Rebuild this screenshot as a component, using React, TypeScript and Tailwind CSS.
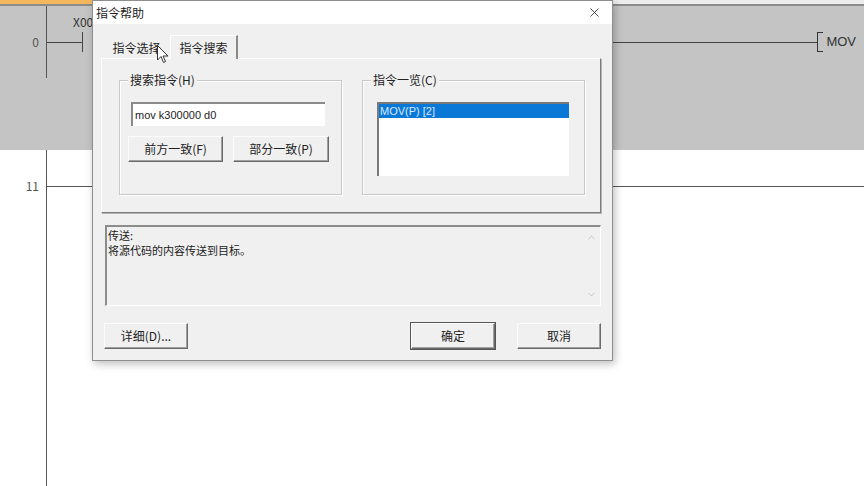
import { X, ChevronUp, ChevronDown } from "lucide-react";

function GroupBox({ title, children }: { title: string; children: React.ReactNode }) {
  return (
    <div className="relative w-[223px] h-[115px] border border-[#c8c8c8] shadow-[inset_1px_1px_0_#fff,1px_1px_0_#fff]">
      <span className="absolute -top-[9px] left-[8px] px-[2px] bg-[#f0f0f0] text-[12px] leading-[16px] text-[#222]">
        {title}
      </span>
      {children}
    </div>
  );
}

function Btn({ label, w, primary }: { label: string; w: string; primary?: boolean }) {
  return (
    <button
      className={
        "h-[26px] bg-[#f0f0f0] text-[12px] text-[#222] border border-t-[#fcfcfc] border-l-[#fcfcfc] border-r-[#6a6a6a] border-b-[#6a6a6a] shadow-[inset_-1px_-1px_0_#a0a0a0] " +
        w +
        (primary ? " outline outline-1 outline-[#555]" : "")
      }
    >
      {label}
    </button>
  );
}

export default function App() {
  return (
    <div className="relative w-[864px] h-[486px] overflow-hidden bg-white flex flex-col font-['Noto_Sans_CJK_SC',sans-serif]">
      {/* top strip */}
      <div className="flex h-[4px]">
        <div className="w-[92px] bg-[#f5b75c]" />
        <div className="flex-1 bg-[#ececec]" />
      </div>
      <div className="h-[2px] bg-[#8c8c8c]" />

      {/* ladder rung 0 */}
      <div className="flex h-[144px] bg-[#c3c4c3]">
        <div className="w-[47px] border-r border-[#555] h-[72px] flex items-center justify-end pr-[7px] text-[12px] text-[#555]">
          0
        </div>
        <div className="flex-1 h-[72px] flex items-center">
          <div className="w-[35px] h-px bg-[#444]" />
          <div className="relative w-px h-[20px] bg-[#444]">
            <span className="absolute -top-[17px] -left-[9px] text-[12px] leading-[14px] text-[#333]">X00</span>
          </div>
          <div className="w-[12px]" />
          <div className="w-px h-[20px] bg-[#444]" />
          <div className="flex-1 h-px bg-[#444]" />
          <div className="w-[6px] h-[20px] border-l border-t border-b border-[#333]" />
          <span className="ml-[3px] mr-[8px] text-[13px] text-[#333] font-['Liberation_Sans',sans-serif]">MOV</span>
        </div>
      </div>

      {/* ladder rung 11 */}
      <div className="flex flex-1">
        <div className="w-[47px] border-r border-[#555] h-full">
          <div className="h-[72px] flex items-center justify-end pr-[7px] text-[12px] text-[#555]">11</div>
        </div>
        <div className="flex-1 h-[72px] flex items-center">
          <div className="flex-1 h-px bg-[#555]" />
        </div>
      </div>

      {/* dialog window */}
      <div className="absolute left-[92px] top-0 w-[521px] h-[361px] bg-[#f0f0f0] border border-[#8e8e8e] shadow-[2px_3px_8px_rgba(0,0,0,0.25)] flex flex-col text-[#222]">
        <div className="h-[23px] bg-white flex items-center justify-between pl-[3px] pr-[10px]">
          <span className="text-[12px] leading-none">指令帮助</span>
          <X size={15} strokeWidth={1.3} className="text-[#222]" />
        </div>

        <div className="mt-[10px] ml-[8px] w-[500px]">
          <div className="flex items-end h-[24px] pl-[2px]">
            <div className="w-[67px] h-[20px] flex items-center justify-center text-[12px]">指令选择</div>
            <div className="w-[68px] h-[24px] -mb-px bg-[#f0f0f0] border-t border-l border-[#fff] border-r-2 border-r-[#8a8a8a] flex items-center justify-center text-[12px] z-10">
              指令搜索
            </div>
          </div>
          <div className="h-[155px] border border-t-[#fff] border-l-[#fff] border-r-[#7c7c7c] border-b-[#7c7c7c] shadow-[1px_1px_0_#b4b4b4] flex gap-[20px] pl-[17px] pt-[21px]">
            <GroupBox title="搜索指令(H)">
              <div className="mt-[21px] ml-[11px] w-[194px] h-[24px] bg-white border-t-2 border-l-2 border-[#8a8a8a] flex items-center pl-[2px] text-[11px] font-['Liberation_Sans',sans-serif]">
                mov k300000 d0
              </div>
              <div className="mt-[10px] ml-[8px] flex gap-[10px]">
                <Btn label="前方一致(F)" w="w-[95px]" />
                <Btn label="部分一致(P)" w="w-[96px]" />
              </div>
            </GroupBox>
            <GroupBox title="指令一览(C)">
              <div className="mt-[21px] ml-[14px] w-[192px] h-[74px] bg-white border-t-2 border-l-2 border-[#7a7a7a]">
                <div className="h-[14px] bg-[#0a78d7] text-[#d8e8ff] text-[11px] leading-[14px] pl-[1px] font-['Liberation_Sans',sans-serif]">
                  MOV(P) [2]
                </div>
              </div>
            </GroupBox>
          </div>
        </div>

        <div className="mt-[12px] ml-[12px] w-[496px] h-[81px] border-t-2 border-l-2 border-[#8c8c8c] border-r border-b border-r-[#fff] border-b-[#fff] flex">
          <div className="flex-1 pl-[1px] pt-[1px] text-[11px] leading-[15px]">
            <div>传送:</div>
            <div>将源代码的内容传送到目标。</div>
          </div>
          <div className="w-[17px] flex flex-col items-center justify-between py-[5px] text-[#b0b0b0]">
            <ChevronUp size={11} strokeWidth={1.5} />
            <ChevronDown size={11} strokeWidth={1.5} />
          </div>
        </div>

        <div className="mt-[17px] ml-[11px] w-[497px] flex">
          <Btn label="详细(D)..." w="w-[84px]" />
          <div className="flex-1" />
          <Btn label="确定" w="w-[84px]" primary />
          <div className="w-[22px]" />
          <Btn label="取消" w="w-[84px]" />
        </div>
      </div>

      {/* mouse pointer */}
      <svg className="absolute left-[157px] top-[45px]" width="12" height="19" viewBox="0 0 12 19">
        <path d="M0.5 0.5 L0.5 15 L4 11.5 L6.5 17.5 L8.5 16.5 L6 11 L11 11 Z" fill="#fff" stroke="#333" strokeWidth="1" />
      </svg>
    </div>
  );
}
